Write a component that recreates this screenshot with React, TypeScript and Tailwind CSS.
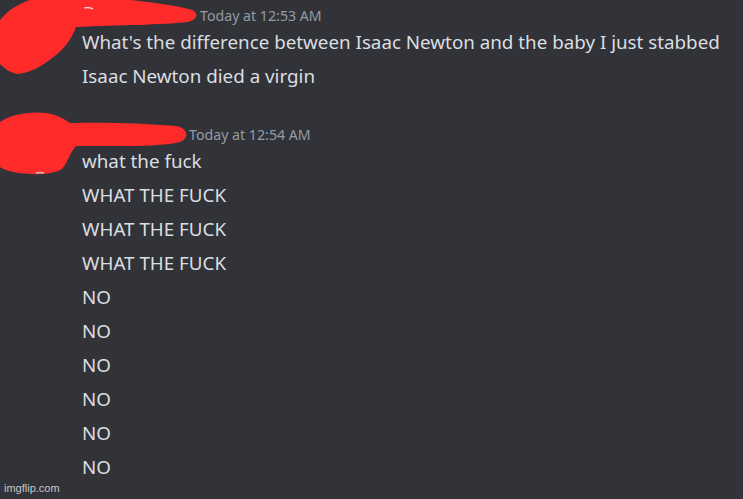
const font = { fontFamily: '"Noto Sans", "Open Sans", sans-serif' }

function Scribbles() {
  return (
    <svg className="absolute left-0 top-0 pointer-events-none" width="743" height="499" viewBox="0 0 743 499">
      <g fill="#ff2a2a">
        <path d="M0 20 C8 10 18 4 30 0 L130 0 C150 2 175 5 192 10 C200 14 196 20 188 22 C160 25 120 25 76 27 C72 38 64 50 52 58 C42 66 30 73 18 74 C10 73 4 68 0 64 Z" />
        <path d="M0 122 C10 115 28 111 46 113 C58 115 64 119 70 123 C100 122 140 123 176 126 C188 128 190 138 180 142 C160 147 120 146 76 146 C70 152 68 162 62 169 C52 175 34 175 18 173 C8 171 2 169 0 167 Z" />
      </g>
      <path d="M84 8 q5 -1 9 1" stroke="#e8e8e8" strokeWidth="1.2" fill="none" />
      <path d="M36 173 q4 -1 8 0" stroke="#c8c8c8" strokeWidth="1.5" fill="none" />
    </svg>
  )
}

function Line({ children }: { children: string }) {
  return <div className="h-[34px] flex items-center text-[18.8px] text-[#dbdee1] whitespace-nowrap">{children}</div>
}

function Header({ time, indent }: { time: string; indent: string }) {
  return (
    <div className="h-[22px] flex items-center">
      <span className={`text-[14.2px] text-[#949ba4] ${indent}`}>{time}</span>
    </div>
  )
}

export default function App() {
  const second = ['what the fuck', 'WHAT THE FUCK', 'WHAT THE FUCK', 'WHAT THE FUCK', 'NO', 'NO', 'NO', 'NO', 'NO', 'NO']
  return (
    <div className="relative w-[743px] h-[499px] bg-[#313338] overflow-hidden" style={font}>
      <div className="flex flex-col pl-[82px] pt-[5px]">
        <Header time="Today at 12:53 AM" indent="ml-[118px]" />
        <div className="-mt-[2px]">
          <Line>What's the difference between Isaac Newton and the baby I just stabbed</Line>
          <Line>Isaac Newton died a virgin</Line>
        </div>
        <div className="h-[31px]" />
        <Header time="Today at 12:54 AM" indent="ml-[107px]" />
        <div className="-mt-[2px]">
          {second.map((t, i) => (
            <Line key={i}>{t}</Line>
          ))}
        </div>
      </div>
      <Scribbles />
      <div className="absolute left-[4px] bottom-[3px] text-[11px] text-[#c8c8c8]" style={{ fontFamily: '"Liberation Sans", Arial, sans-serif' }}>
        imgflip.com
      </div>
    </div>
  )
}
